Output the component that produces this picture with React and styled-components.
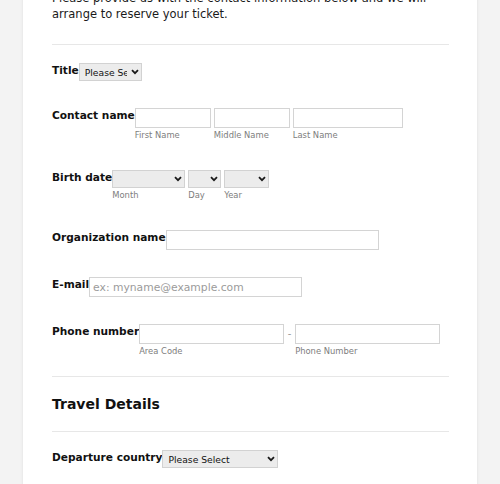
import React from 'react';
import styled, { createGlobalStyle } from 'styled-components';

const Global = createGlobalStyle`
  html, body { margin: 0; padding: 0; background: #f3f3f3; }
  body { font-family: "DejaVu Sans", Verdana, sans-serif; overflow: hidden; color: #111; }
  * { box-sizing: border-box; }
`;

const Page = styled.div`
  min-height: 484px;
  padding: 0 23px;
`;

const Card = styled.main`
  background: #fff;
  margin-top: -10px;
  padding: 0 28px 60px 29px;
  min-height: 560px;
  box-shadow: 0 0 3px rgba(0, 0, 0, 0.09);
`;

const Intro = styled.p`
  margin: 0;
  font-size: 11.5px;
  line-height: 16px;
  color: #1a1a1a;
`;

const Divider = styled.div`
  height: 1px;
  background: #e7e7e7;
  margin: ${p => p.$top}px 0 18px;
`;

const Section = styled.div`
  display: flex;
  flex-direction: column;
  gap: 27px;
`;

const Field = styled.div`
  display: flex;
  align-items: flex-start;
`;

const Label = styled.label`
  font-size: 10.6px;
  font-weight: bold;
  line-height: 14px;
  color: #111;
  white-space: nowrap;
`;

const Controls = styled.div`
  display: flex;
  align-items: flex-start;
  gap: ${p => p.$gap ?? 3}px;
`;

const Column = styled.div`
  display: flex;
  flex-direction: column;
`;

const Sub = styled.span`
  font-size: 8.4px;
  line-height: 14px;
  padding-bottom: 1px;
  color: #7d7d7d;
`;

const TextInput = styled.input`
  width: ${p => p.$w}px;
  height: 20px;
  margin: 0;
  padding: 0 3px;
  border: 1px solid #d4d4d4;
  border-radius: 0;
  background: #fff;
  font-family: "DejaVu Sans", Verdana, sans-serif;
  font-size: 10.75px;
  color: #222;
  outline: none;
  &::placeholder { color: #9b9b9b; }
`;

const SelectWrap = styled.span`
  position: relative;
  display: inline-flex;
`;

const SelectBox = styled.select`
  appearance: none;
  -webkit-appearance: none;
  width: ${p => p.$w}px;
  height: 18px;
  margin: 0;
  padding: 0 14px 0 5px;
  border: 1px solid #d2d2d2;
  border-radius: 0;
  background: #ececec;
  font-family: "DejaVu Sans", Verdana, sans-serif;
  font-size: 9.2px;
  color: #111;
  outline: none;
`;

const Chevron = styled.svg`
  position: absolute;
  right: 3px;
  top: 6px;
  pointer-events: none;
`;

const Dash = styled.span`
  width: 11px;
  text-align: center;
  font-size: 10px;
  line-height: 20px;
  color: #9a9a9a;
`;

const Heading = styled.h2`
  margin: 0;
  font-size: 14px;
  line-height: 18px;
  font-weight: bold;
  color: #111;
`;

function Select({ w, children }) {
  return (
    <SelectWrap>
      <SelectBox $w={w} defaultValue="">
        {children}
      </SelectBox>
      <Chevron width="8" height="6" viewBox="0 0 8 6">
        <path d="M1 1.2 L4 4.2 L7 1.2" fill="none" stroke="#1a1a1a" strokeWidth="1.8" />
      </Chevron>
    </SelectWrap>
  );
}

export default function App() {
  return (
    <>
      <Global />
      <Page>
        <Card>
          <Intro>
            Please provide us with the contact information below and we will arrange to reserve your ticket.
          </Intro>
          <Divider $top={22} />
          <Section>
            <Field>
              <Label>Title</Label>
              <Select w={63}>
                <option value="">Please Select</option>
                <option>Mr.</option>
                <option>Mrs.</option>
                <option>Ms.</option>
              </Select>
            </Field>

            <Field>
              <Label>Contact name</Label>
              <Controls>
                <Column>
                  <TextInput $w={76} />
                  <Sub>First Name</Sub>
                </Column>
                <Column>
                  <TextInput $w={76} />
                  <Sub>Middle Name</Sub>
                </Column>
                <Column>
                  <TextInput $w={110} />
                  <Sub>Last Name</Sub>
                </Column>
              </Controls>
            </Field>

            <Field>
              <Label>Birth date</Label>
              <Controls>
                <Column>
                  <Select w={73}><option value=""></option></Select>
                  <Sub>Month</Sub>
                </Column>
                <Column>
                  <Select w={33}><option value=""></option></Select>
                  <Sub>Day</Sub>
                </Column>
                <Column>
                  <Select w={45}><option value=""></option></Select>
                  <Sub>Year</Sub>
                </Column>
              </Controls>
            </Field>

            <Field>
              <Label>Organization name</Label>
              <TextInput $w={213} />
            </Field>

            <Field>
              <Label>E-mail</Label>
              <TextInput $w={213} placeholder="ex: myname@example.com" />
            </Field>

            <Field>
              <Label>Phone number</Label>
              <Controls $gap={0}>
                <Column>
                  <TextInput $w={145} />
                  <Sub>Area Code</Sub>
                </Column>
                <Dash>-</Dash>
                <Column>
                  <TextInput $w={145} />
                  <Sub>Phone Number</Sub>
                </Column>
              </Controls>
            </Field>
          </Section>

          <Divider $top={17} />
          <Heading>Travel Details</Heading>
          <Divider $top={18} />

          <Section>
            <Field>
              <Label>Departure country</Label>
              <Select w={116}>
                <option value="">Please Select</option>
              </Select>
            </Field>
          </Section>
        </Card>
      </Page>
    </>
  );
}
